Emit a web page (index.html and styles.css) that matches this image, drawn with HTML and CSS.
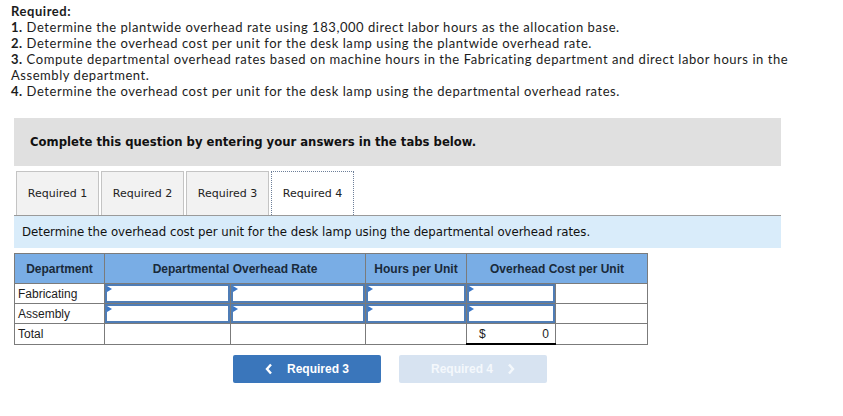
FILE: index.html
```html
<!DOCTYPE html>
<html lang="en">
  <head>
    <meta charset="UTF-8" />
    <title>Required 4</title>
    <link rel="stylesheet" href="styles.css">
  </head>
  <body>
    <div class="required">
      <div class="heading">Required:</div>
      <div><b>1.</b> Determine the plantwide overhead rate using 183,000 direct labor hours as the allocation base.</div>
      <div><b>2.</b> Determine the overhead cost per unit for the desk lamp using the plantwide overhead rate.</div>
      <div><b>3.</b> Compute departmental overhead rates based on machine hours in the Fabricating department and direct labor hours in the</div>
      <div>Assembly department.</div>
      <div><b>4.</b> Determine the overhead cost per unit for the desk lamp using the departmental overhead rates.</div>
    </div>

    <div class="instructions">Complete this question by entering your answers in the tabs below.</div>

    <div class="tabs">
      <div class="tab">Required 1</div>
      <div class="tab">Required 2</div>
      <div class="tab">Required 3</div>
      <div class="tab active">Required 4</div>
    </div>
    <div class="prompt">Determine the overhead cost per unit for the desk lamp using the departmental overhead rates.</div>

    <table class="grid">
      <colgroup>
        <col style="width: 90px">
        <col style="width: 126px">
        <col style="width: 135px">
        <col style="width: 101px">
        <col style="width: 89px">
        <col style="width: 92px">
      </colgroup>
      <tr class="head">
        <th>Department</th>
        <th colspan="2">Departmental Overhead Rate</th>
        <th>Hours per Unit</th>
        <th colspan="2">Overhead Cost per Unit</th>
      </tr>
      <tr>
        <td class="label">Fabricating</td>
        <td class="in"><div class="field"></div></td>
        <td class="in"><div class="field"></div></td>
        <td class="in"><div class="field"></div></td>
        <td class="in"><div class="field"></div></td>
        <td></td>
      </tr>
      <tr>
        <td class="label">Assembly</td>
        <td class="in"><div class="field"></div></td>
        <td class="in"><div class="field"></div></td>
        <td class="in"><div class="field"></div></td>
        <td class="in"><div class="field"></div></td>
        <td></td>
      </tr>
      <tr class="total">
        <td class="label">Total</td>
        <td></td>
        <td></td>
        <td></td>
        <td class="sum"><div class="sum-row"><span>$</span><span>0</span></div></td>
        <td></td>
      </tr>
    </table>

    <div class="nav">
      <div class="btn prev">
        <svg class="chev" width="8" height="12" viewBox="0 0 8 12"><path d="M6 1.5 L2 6 L6 10.5" fill="none" stroke="white" stroke-width="2.4"/></svg>
        <span>Required 3</span>
      </div>
      <div class="btn next">
        <span>Required 4</span>
        <svg class="chev" width="8" height="12" viewBox="0 0 8 12"><path d="M2 1.5 L6 6 L2 10.5" fill="none" stroke="#f4f8fc" stroke-width="2.4"/></svg>
      </div>
    </div>
  </body>
</html>
```

FILE: styles.css
```css
body {
  margin: 0;
  padding: 3px 0 0 0;
  font-family: Lato, "Liberation Sans", sans-serif;
  color: #1c1c1c;
  background: white;
}
.required {
  margin-left: 11px;
  width: 820px;
  font-size: 13px;
  letter-spacing: 0.55px;
  line-height: 16px;
}
.required .heading {
  font-weight: bold;
}
.instructions {
  margin: 19px 0 0 14px;
  width: 751px;
  height: 48px;
  padding-left: 16px;
  display: flex;
  align-items: center;
  background-color: #e0e0e0;
  font-family: "DejaVu Sans", Verdana, sans-serif;
  font-weight: bold;
  font-size: 11.65px;
  color: #111;
}
.tabs {
  display: flex;
  gap: 2px;
  margin: 5px 0 0 16px;
  font-family: "DejaVu Sans", Verdana, sans-serif;
  font-size: 11px;
}
.tab {
  width: 83px;
  height: 44px;
  box-sizing: border-box;
  display: flex;
  align-items: center;
  justify-content: center;
  background-color: #f2f2f2;
  border: #c4c4c4 solid 1px;
  border-bottom: none;
  color: #222;
}
.tab.active {
  background-color: white;
  border: #6d7f99 dotted 1px;
  border-bottom: none;
}
.prompt {
  margin-left: 14px;
  width: 767px;
  height: 33px;
  box-sizing: border-box;
  padding-left: 8px;
  display: flex;
  align-items: center;
  background-color: #d9ecfa;
  border-top: #9a9a9a solid 1px;
  font-family: "DejaVu Sans", Verdana, sans-serif;
  font-size: 11.75px;
  color: #111;
}
.grid {
  margin: 5px 0 0 14px;
  border-collapse: collapse;
  font-family: "Liberation Sans", Arial, sans-serif;
  font-size: 12px;
  table-layout: fixed;
  width: 633px;
}
.grid th,
.grid td {
  border: #7b7b7b solid 1px;
  padding: 0;
}
.grid th {
  background-color: #79ade5;
  height: 29px;
  font-weight: bold;
  color: #1a2a3a;
}
.grid td {
  height: 19px;
}
.grid td.label {
  padding-left: 3px;
}
.field {
  position: relative;
  height: 19px;
  box-sizing: border-box;
  border: #4f7db6 solid 2px;
  background: white;
}
.field::before {
  content: '';
  position: absolute;
  left: 0;
  top: 0;
  border-left: 5px solid #3c78c8;
  border-top: 3px solid transparent;
  border-bottom: 3px solid transparent;
}
.grid td.sum {
  border-top: black solid 1px;
  border-bottom: black solid 2px;
  padding: 0 6px 0 12px;
}
.sum-row {
  display: flex;
  justify-content: space-between;
}
.nav {
  display: flex;
  gap: 18px;
  margin: 10px 0 0 233px;
  font-family: "Liberation Sans", Arial, sans-serif;
  font-weight: bold;
  font-size: 12px;
}
.btn {
  width: 148px;
  height: 28px;
  display: flex;
  align-items: center;
  justify-content: center;
  gap: 14px;
  border-radius: 2px;
  color: white;
}
.prev {
  background-color: #3a76bb;
}
.next {
  background-color: #d7e3f1;
  color: #f4f8fc;
}
```
